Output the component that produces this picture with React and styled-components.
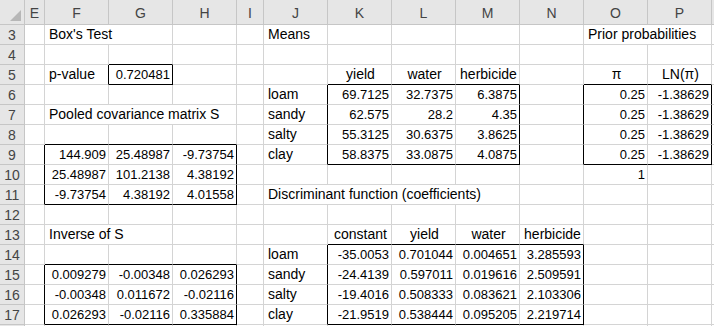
import React from "react";
import styled, { createGlobalStyle } from "styled-components";

const GlobalStyle = createGlobalStyle`
  html, body {
    margin: 0;
    padding: 0;
    background: #ffffff;
    overflow: hidden;
  }
  body {
    font-family: "Liberation Sans", Arial, sans-serif;
  }
`;

const COLS = ["E", "F", "G", "H", "I", "J", "K", "L", "M", "N", "O", "P", "Q"];
const ROWS = [3, 4, 5, 6, 7, 8, 9, 10, 11, 12, 13, 14, 15, 16, 17, 18];
const SHOWN_ROWS = 17; // last row whose number fits in the window

/* cell contents: num = right aligned, mid = centred, span = text spilling over */
const CELLS = {
  F3: { v: "Box's Test", span: 2 },
  J3: { v: "Means" },
  O3: { v: "Prior probabilities", span: 2 },

  F5: { v: "p-value" },
  G5: { v: "0.720481", num: true },
  K5: { v: "yield", mid: true },
  L5: { v: "water", mid: true },
  M5: { v: "herbicide", mid: true },
  O5: { v: "π", mid: true },
  P5: { v: "LN(π)", mid: true },

  J6: { v: "loam" },
  K6: { v: "69.7125", num: true },
  L6: { v: "32.7375", num: true },
  M6: { v: "6.3875", num: true },
  O6: { v: "0.25", num: true },
  P6: { v: "-1.38629", num: true },

  F7: { v: "Pooled covariance matrix S", span: 3 },
  J7: { v: "sandy" },
  K7: { v: "62.575", num: true },
  L7: { v: "28.2", num: true },
  M7: { v: "4.35", num: true },
  O7: { v: "0.25", num: true },
  P7: { v: "-1.38629", num: true },

  J8: { v: "salty" },
  K8: { v: "55.3125", num: true },
  L8: { v: "30.6375", num: true },
  M8: { v: "3.8625", num: true },
  O8: { v: "0.25", num: true },
  P8: { v: "-1.38629", num: true },

  F9: { v: "144.909", num: true },
  G9: { v: "25.48987", num: true },
  H9: { v: "-9.73754", num: true },
  J9: { v: "clay" },
  K9: { v: "58.8375", num: true },
  L9: { v: "33.0875", num: true },
  M9: { v: "4.0875", num: true },
  O9: { v: "0.25", num: true },
  P9: { v: "-1.38629", num: true },

  F10: { v: "25.48987", num: true },
  G10: { v: "101.2138", num: true },
  H10: { v: "4.38192", num: true },
  O10: { v: "1", num: true },

  F11: { v: "-9.73754", num: true },
  G11: { v: "4.38192", num: true },
  H11: { v: "4.01558", num: true },
  J11: { v: "Discriminant function (coefficients)", span: 4 },

  F13: { v: "Inverse of S", span: 2 },
  K13: { v: "constant", mid: true },
  L13: { v: "yield", mid: true },
  M13: { v: "water", mid: true },
  N13: { v: "herbicide", mid: true },

  J14: { v: "loam" },
  K14: { v: "-35.0053", num: true },
  L14: { v: "0.701044", num: true },
  M14: { v: "0.004651", num: true },
  N14: { v: "3.285593", num: true },

  F15: { v: "0.009279", num: true },
  G15: { v: "-0.00348", num: true },
  H15: { v: "0.026293", num: true },
  J15: { v: "sandy" },
  K15: { v: "-24.4139", num: true },
  L15: { v: "0.597011", num: true },
  M15: { v: "0.019616", num: true },
  N15: { v: "2.509591", num: true },

  F16: { v: "-0.00348", num: true },
  G16: { v: "0.011672", num: true },
  H16: { v: "-0.02116", num: true },
  J16: { v: "salty" },
  K16: { v: "-19.4016", num: true },
  L16: { v: "0.508333", num: true },
  M16: { v: "0.083621", num: true },
  N16: { v: "2.103306", num: true },

  F17: { v: "0.026293", num: true },
  G17: { v: "-0.02116", num: true },
  H17: { v: "0.335884", num: true },
  J17: { v: "clay" },
  K17: { v: "-21.9519", num: true },
  L17: { v: "0.538444", num: true },
  M17: { v: "0.095205", num: true },
  N17: { v: "2.219714", num: true },
};

/* outlined ranges: [firstCol, firstRow, lastCol, lastRow] */
const BOXES = [
  ["G", 5, "G", 5],
  ["K", 6, "M", 9],
  ["O", 6, "P", 9],
  ["F", 9, "H", 11],
  ["K", 14, "N", 17],
  ["F", 15, "H", 17],
].map(([c1, r1, c2, r2]) => ({
  c1: COLS.indexOf(c1),
  c2: COLS.indexOf(c2),
  r1,
  r2,
}));

const GRID = "#d4d4d4";
const INK = "#000000";

const rightEdgeDark = (ci, r) =>
  BOXES.some(
    (b) => r >= b.r1 && r <= b.r2 && (ci === b.c2 || ci + 1 === b.c1)
  );

const bottomEdgeDark = (ci, r) =>
  BOXES.some(
    (b) => ci >= b.c1 && ci <= b.c2 && (r === b.r2 || r + 1 === b.r1)
  );

const App = () => {
  const body = [];
  ROWS.forEach((r) => {
    body.push(<RowHead key={"h" + r}>{r <= SHOWN_ROWS ? r : ""}</RowHead>);
    let ci = 0;
    while (ci < COLS.length) {
      const cell = CELLS[COLS[ci] + r];
      const span = cell && cell.span ? cell.span : 1;
      const last = ci + span - 1;
      body.push(
        <Cell
          key={COLS[ci] + r}
          $span={span}
          $num={!!(cell && cell.num)}
          $align={cell ? (cell.num ? "right" : cell.mid ? "center" : "left") : "left"}
          $right={rightEdgeDark(last, r) ? INK : GRID}
          $bottom={bottomEdgeDark(ci, r) ? INK : GRID}
        >
          {cell ? cell.v : ""}
        </Cell>
      );
      ci += span;
    }
  });

  return (
    <>
      <GlobalStyle />
      <Sheet>
        <Corner />
        {COLS.map((c) => (
          <ColHead key={c}>{c === "Q" ? "" : c}</ColHead>
        ))}
        {body}
      </Sheet>
    </>
  );
};

export default App;

/* sheet */
const Sheet = styled.div`
  display: grid;
  grid-template-columns: 25px 20px 64px 64px 64px 27px repeat(7, 64px) 1fr;
  grid-template-rows: 25px;
  grid-auto-rows: 20px;
  width: 714px;
  height: 326px;
  overflow: hidden;
  background: #ffffff;
`;

const HeadBase = styled.div`
  box-sizing: border-box;
  background: #e6e6e6;
  color: #444444;
  border-right: 1px solid #c6c6c6;
  border-bottom: 1px solid #c6c6c6;
  font-size: 14px;
  display: flex;
  justify-content: center;
  align-items: center;
`;

const Corner = styled(HeadBase)`
  position: relative;

  &::after {
    content: "";
    position: absolute;
    right: 3px;
    bottom: 3px;
    border-style: solid;
    border-width: 0 0 11px 11px;
    border-color: transparent transparent #b7b7b7 transparent;
  }
`;

const ColHead = styled(HeadBase)`
  padding-top: 2px;
`;

const RowHead = styled(HeadBase)`
  font-size: 14px;
`;

const Cell = styled.div`
  grid-column: span ${(p) => p.$span};
  box-sizing: border-box;
  border-right: 1px solid ${(p) => p.$right};
  border-bottom: 1px solid ${(p) => p.$bottom};
  padding: 0 2px 0 4px;
  font-size: ${(p) => (p.$num ? "13px" : "14px")};
  line-height: 19px;
  color: #000000;
  text-align: ${(p) => p.$align};
  white-space: nowrap;
  overflow: hidden;
`;
